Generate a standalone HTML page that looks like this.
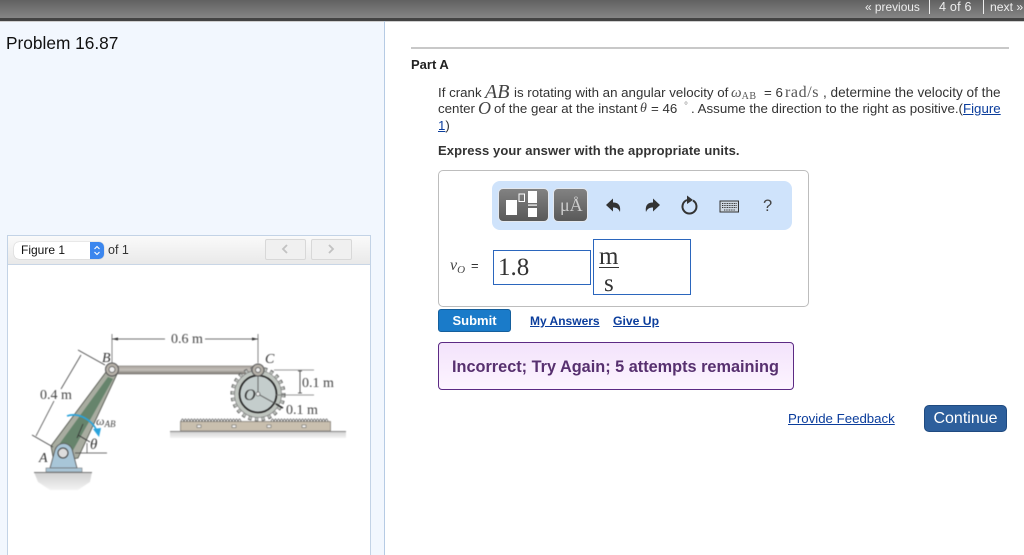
<!DOCTYPE html>
<html><head><meta charset="utf-8"><style>
html,body{margin:0;padding:0;background:#fff}
#p{position:relative;width:1024px;height:555px;overflow:hidden;font-family:"Liberation Sans",sans-serif;color:#333;background:#fff}
#p div,#p span.a,#p a.a{position:absolute;white-space:nowrap}
a{color:#0b3d9c;text-decoration:underline}
.s{font-family:"Liberation Serif",serif}
.t{font-size:13.3px;line-height:16px;color:#333}
</style></head><body><div id="p">
<div style="left:0;top:0;width:1024px;height:18px;background:linear-gradient(#616161,#858585)"></div>
<div style="left:0;top:18px;width:1024px;height:3px;background:#434343"></div>
<div style="left:0;top:21px;width:1024px;height:1px;background:#cfcfcf"></div>
<div style="left:865px;top:0;font-size:11.9px;line-height:15px;color:#eee">« previous</div>
<div style="left:929px;top:0;width:1px;height:14px;background:#eee"></div>
<div style="left:939px;top:0;font-size:12.6px;line-height:14px;color:#eee;letter-spacing:.2px">4 of 6</div>
<div style="left:983px;top:0;width:1px;height:14px;background:#eee"></div>
<div style="left:990px;top:0;font-size:12.2px;line-height:15px;color:#eee">next »</div>

<div style="left:0;top:22px;width:384px;height:533px;background:#f2f7fe"></div>
<div style="left:384px;top:21px;width:1px;height:534px;background:#b6cbe4"></div>
<div style="left:6px;top:33px;font-size:17.3px;line-height:20px;color:#111">Problem 16.87</div>

<div style="left:7px;top:235px;width:362px;height:320px;border:1px solid #c3d3e6;border-bottom:0;background:#fff"></div>
<div style="left:8px;top:236px;width:362px;height:28px;background:linear-gradient(#fafafa,#e9e9e9);border-bottom:1px solid #c9d6e6"></div>
<div style="left:14px;top:242px;width:90px;height:17px;background:#fff;border-radius:5px;box-shadow:0 0 1px #999"></div>
<div style="left:90px;top:242px;width:14px;height:17px;background:#3b86ee;border-radius:0 5px 5px 0"></div>
<svg style="position:absolute;left:90px;top:242px" width="14" height="17"><path d="M4.5 7 7 4.5 9.5 7M4.5 10 7 12.5 9.5 10" fill="none" stroke="#fff" stroke-width="1.1"/></svg>
<div style="left:21px;top:243px;font-size:12px;line-height:15px;color:#111">Figure 1</div>
<div style="left:108px;top:243px;font-size:12.5px;line-height:15px;color:#333">of 1</div>
<div style="left:265px;top:239px;width:39px;height:19px;border:1px solid #d8d8d8;border-radius:2px;background:#f0f0f0"></div>
<div style="left:311px;top:239px;width:39px;height:19px;border:1px solid #d8d8d8;border-radius:2px;background:#f0f0f0"></div>
<svg style="position:absolute;left:265px;top:239px" width="90" height="20"><path d="M22 6 18 10 22 14M64 6 68 10 64 14" fill="none" stroke="#c2c2c2" stroke-width="1.8"/></svg>

<svg style="position:absolute;left:0;top:320px;filter:blur(.5px)" width="370" height="180" viewBox="0 320 370 180" font-family="Liberation Serif, serif" fill="#333">
<defs><linearGradient id="g1" x1="0" y1="0" x2="0" y2="1"><stop offset="0" stop-color="#a8a29c"/><stop offset=".5" stop-color="#c4c0ba"/><stop offset="1" stop-color="#77736e"/></linearGradient>
<linearGradient id="g2" x1="0" y1="0" x2="0" y2="1"><stop offset="0" stop-color="#cfcfcf"/><stop offset="1" stop-color="#f4f4f4"/></linearGradient></defs>
<path d="M34 472H92L90 482 78 490H50L38 482Z" fill="url(#g2)"/>
<rect x="170" y="431" width="176" height="7" fill="url(#g2)"/>
<path d="M106 372 51 446 54 462 78 458 117 374Z" fill="#a8aca0" stroke="#4d4f48" stroke-width=".8"/>
<path d="M108 377 58 446 72 452 113 379Z" fill="#66846c"/>
<path d="M77 438 83 424M78 435 90 442" stroke="#333" fill="none" stroke-width=".8"/>
<path d="M50 468 55 450A9 9 0 0 1 72 449L77 468Z" fill="#a8c6d8" stroke="#555" stroke-width=".8"/>
<rect x="46" y="468" width="36" height="4" fill="#a9c5d6" stroke="#666" stroke-width=".5"/>
<circle cx="63" cy="453" r="5" fill="#ddd" stroke="#444"/>
<path d="M34 472.5H92" stroke="#777"/>
<path d="M75 453H107M87 443V453" stroke="#444" stroke-width=".7" fill="none"/>
<path d="M67 416C79 412 92 420 97 431" stroke="#2aa3dc" stroke-width="1.7" fill="none"/><path d="M93 429 101 428 99 437Z" fill="#2aa3dc"/>
<rect x="112" y="366" width="148" height="8" fill="url(#g1)" stroke="#6d6863" stroke-width=".5"/>
<circle cx="112" cy="369.5" r="6.5" fill="#b5b0a8" stroke="#555"/><circle cx="112" cy="369.5" r="3" fill="#eee" stroke="#555" stroke-width=".7"/>
<path d="M112 334V363M258 334V363" stroke="#555" stroke-width=".7"/>
<path d="M112 339H165M205 339H258" stroke="#444" stroke-width=".7"/><path d="M112 339 118 337.5V340.5ZM258 339 252 337.5V340.5Z" fill="#333"/>
<circle cx="258" cy="394" r="25" fill="none" stroke="#555" stroke-width="5" stroke-dasharray="3.2 3.3"/>
<circle cx="258" cy="394" r="25" fill="none" stroke="#b9bdb9" stroke-width="3.4" stroke-dasharray="2.4 4.1" stroke-dashoffset="-.4"/>
<circle cx="258" cy="394" r="23.5" fill="#bfc5bf" stroke="#777" stroke-width=".6"/>
<circle cx="258" cy="394" r="18.5" fill="#c4cdcc" stroke="#222" stroke-width="1.6"/>
<path d="M258 394V374M258 394 276 404" stroke="#555" stroke-width=".8"/><circle cx="258" cy="394" r="2" fill="#eee" stroke="#444" stroke-width=".6"/>
<path d="M181 421.5q1.5-5 3 0q1.5-5 3 0q1.5-5 3 0q1.5-5 3 0q1.5-5 3 0q1.5-5 3 0q1.5-5 3 0q1.5-5 3 0q1.5-5 3 0q1.5-5 3 0q1.5-5 3 0q1.5-5 3 0q1.5-5 3 0q1.5-5 3 0q1.5-5 3 0q1.5-5 3 0q1.5-5 3 0q1.5-5 3 0q1.5-5 3 0q1.5-5 3 0M271 421.5q1.5-5 3 0q1.5-5 3 0q1.5-5 3 0q1.5-5 3 0q1.5-5 3 0q1.5-5 3 0q1.5-5 3 0q1.5-5 3 0q1.5-5 3 0q1.5-5 3 0q1.5-5 3 0q1.5-5 3 0q1.5-5 3 0q1.5-5 3 0q1.5-5 3 0q1.5-5 3 0q1.5-5 3 0q1.5-5 3 0q1.5-5 3 0" stroke="#555" fill="none" stroke-width=".8"/>
<rect x="180.5" y="421.5" width="150" height="9.5" fill="#c9bfae" stroke="#66625a" stroke-width=".6"/>
<g fill="#fff" stroke="#555" stroke-width=".5"><rect x="197" y="425" width="4" height="2.5"/><rect x="232" y="425" width="4" height="2.5"/><rect x="267" y="425" width="4" height="2.5"/><rect x="302" y="425" width="4" height="2.5"/></g>
<path d="M170 431.5H346" stroke="#888"/>
<circle cx="258" cy="370" r="6" fill="#b5b0a8" stroke="#555"/><circle cx="258" cy="370" r="2.5" fill="#eee" stroke="#555" stroke-width=".7"/>
<path d="M274 370H314M276 395H314" stroke="#777" stroke-width=".7"/>
<path d="M300 371V393M298 371H302M298 393H302" stroke="#333" stroke-width=".8"/>
<path d="M276 404 283 408" stroke="#222" stroke-width="1.5"/>
<path d="M78 350 105 365M32 435 53 447" stroke="#444" stroke-width=".8"/>
<path d="M81 355 61 389M54 401 36 436" stroke="#444" stroke-width=".8"/>
<g font-size="14" fill="#444">
<text x="171" y="343">0.6 m</text><text x="40" y="399">0.4 m</text><text x="302" y="387">0.1 m</text><text x="286" y="414">0.1 m</text></g>
<g font-size="14" font-style="italic" fill="#333"><text x="102" y="362">B</text><text x="265" y="363">C</text><text x="39" y="462">A</text><text x="244" y="400" font-size="16">O</text><text x="90" y="449" font-size="15">θ</text></g>
<text x="96" y="425" font-size="12" font-style="italic" fill="#444">ω<tspan font-size="9" dy="2">AB</tspan></text>
</svg>

<div style="left:411px;top:47px;width:598px;height:2px;background:#c8c8c8"></div>
<div style="left:411px;top:57px;font-size:13px;line-height:16px;font-weight:bold;color:#222">Part A</div>

<div class="t" style="left:438px;top:85px">If crank</div>
<div class="s" style="left:485px;top:82px;font-size:20px;line-height:20px;font-style:italic;color:#444">AB</div>
<div class="t" style="left:514px;top:85px">is rotating with an angular velocity of</div>
<div class="s" style="left:731px;top:85px;font-size:15px;line-height:16px;font-style:italic;color:#555">ω<span style="font-size:10px;font-style:normal;letter-spacing:.6px;vertical-align:-2px">AB</span></div>
<div class="t" style="left:764px;top:85px">= 6</div>
<div class="s" style="left:785px;top:85px;font-size:16px;line-height:16px;letter-spacing:.6px;color:#555">rad/s</div>
<div class="t" style="left:823px;top:85px;font-size:13.6px">, determine the velocity of the</div>
<div class="t" style="left:438px;top:101px">center</div>
<div class="s" style="left:478px;top:98px;font-size:18px;line-height:20px;font-style:italic;color:#444">O</div>
<div class="t" style="left:494px;top:101px">of the gear at the instant</div>
<div class="s" style="left:640px;top:101px;font-size:14px;line-height:16px;font-style:italic;color:#444">θ</div>
<div class="t" style="left:651px;top:101px">= 46</div>
<div class="t" style="left:684px;top:99px;font-size:10px;color:#888">°</div>
<div class="t" style="left:691px;top:101px">. Assume the direction to the right as positive.(<a href="#">Figure</a></div>
<div class="t" style="left:438px;top:118px"><a href="#">1</a>)</div>
<div class="t" style="left:438px;top:143px;font-size:13px;font-weight:bold;letter-spacing:.1px">Express your answer with the appropriate units.</div>

<div style="left:438px;top:170px;width:369px;height:135px;border:1px solid #bdbdbd;border-radius:5px;background:#fff"></div>
<div style="left:492px;top:181px;width:300px;height:49px;background:#cfe3fb;border-radius:8px"></div>
<div style="left:498px;top:188px;width:49px;height:32px;background:linear-gradient(#828282,#595959);border:1px solid #e4e8ee;border-radius:5px"></div>
<div style="left:553px;top:188px;width:33px;height:32px;background:linear-gradient(#828282,#595959);border:1px solid #e4e8ee;border-radius:5px"></div>
<svg style="position:absolute;left:499px;top:188px" width="50" height="34"><rect x="7" y="12" width="11" height="15" fill="#fff"/><rect x="20" y="6" width="5.5" height="7.5" fill="none" stroke="#fff"/><rect x="29" y="3" width="9" height="12" fill="#fff"/><rect x="29" y="16.5" width="9" height="1.2" fill="#fff"/><rect x="29" y="20" width="9" height="9" fill="#fff"/></svg>
<div class="s" style="left:560px;top:193px;font-size:18px;line-height:24px;color:#ccc">μÅ</div>
<svg style="position:absolute;left:600px;top:190px" width="180" height="32" fill="#333">
<path d="M6 15 13 8.5V12.5C18 12.5 21 15 20 22 18.5 18.5 16.500 17.5 13 17.5V21.5Z"/>
<path d="M60 15 53 8.5V12.5C48 12.5 45 15 46 22 47.5 18.5 49.5 17.5 53 17.5V21.5Z"/>
<path d="M87 10A7 7 0 1 0 93 10.5" fill="none" stroke="#333" stroke-width="2"/><path d="M87 5.5 93 10 87 14Z"/>
<rect x="120" y="11" width="18.5" height="11" fill="#cfd8e2" stroke="#333" stroke-width="1"/><path d="M122 13.5H137M122 15.5H137M122 17.5H137M124 20H135" stroke="#333" stroke-width="1" stroke-dasharray="1 .7"/>
</svg>
<div style="left:763px;top:196px;font-size:16.5px;line-height:20px;color:#444">?</div>

<div class="s" style="left:450px;top:258px;font-size:16px;line-height:16px;font-style:italic;color:#444">v<span style="font-size:11px;vertical-align:-3px">O</span></div>
<div class="t" style="left:471px;top:258px;font-size:13px">=</div>
<div style="left:493px;top:250px;width:96px;height:33px;border:1px solid #2b66bd;background:#fff"></div>
<div class="s" style="left:498px;top:253px;font-size:25px;line-height:30px;color:#333">1.8</div>
<div style="left:593px;top:239px;width:96px;height:54px;border:1px solid #2b66bd;background:#fff"></div>
<div class="s" style="left:599px;top:243px;font-size:25px;line-height:28px;color:#333">m</div>
<div style="left:599px;top:267px;width:20px;height:1px;background:#333"></div>
<div class="s" style="left:604px;top:270px;font-size:25px;line-height:28px;color:#333">s</div>

<div style="left:438px;top:309px;width:71px;height:21px;background:#1a7bc9;border:1px solid #155f9c;border-radius:3px;color:#fff;font-size:13px;font-weight:bold;line-height:21px;text-align:center">Submit</div>
<a class="a" href="#" style="left:530px;top:314px;font-size:12px;line-height:15px;font-weight:bold">My Answers</a>
<a class="a" href="#" style="left:613px;top:314px;font-size:12.2px;line-height:15px;font-weight:bold">Give Up</a>

<div style="left:438px;top:342px;width:354px;height:46px;border:1px solid #5c2a84;border-radius:4px;background:linear-gradient(#f3e3fb,#fdf4ff)"></div>
<div style="left:452px;top:357px;font-size:16.3px;line-height:20px;font-weight:bold;color:#57306f">Incorrect; Try Again; 5 attempts remaining</div>

<a class="a" href="#" style="left:788px;top:410px;font-size:13.25px;line-height:18px">Provide Feedback</a>
<div style="left:924px;top:405px;width:81px;height:25px;background:#2d5f9c;border:1px solid #1f4a80;border-radius:5px;color:#fff;font-size:16px;line-height:25px;text-align:center">Continue</div>
</div></body></html>
